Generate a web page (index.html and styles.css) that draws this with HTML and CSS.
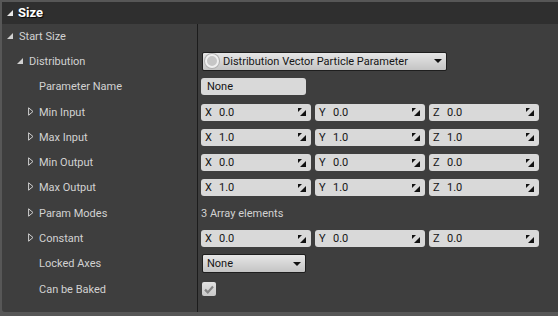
FILE: index.html
```html
<!DOCTYPE html>
<html lang="en">

<head>
    <meta charset="UTF-8">
    <meta name="viewport" content="width=device-width, initial-scale=1.0">
    <title>Details - Size</title>

    <link rel="stylesheet" href="styles.css">
</head>

<body>
    <div class="panel">
        <div class="category">
            <span class="arrow-open"></span>
            <span class="category-name">Size</span>
        </div>

        <ul class="rows">
            <li class="row">
                <div class="label indent-0"><span class="arrow-open"></span>Start Size</div>
                <div class="value"></div>
            </li>

            <li class="row">
                <div class="label indent-1"><span class="arrow-open"></span>Distribution</div>
                <div class="value">
                    <div class="combo combo-wide">
                        <span class="combo-icon"></span>
                        <span class="combo-text">Distribution Vector Particle Parameter</span>
                        <span class="combo-arrow"></span>
                    </div>
                </div>
            </li>

            <li class="row">
                <div class="label indent-2">Parameter Name</div>
                <div class="value">
                    <div class="textbox">None</div>
                </div>
            </li>

            <li class="row">
                <div class="label indent-2 expandable">Min Input</div>
                <div class="value">
                    <div class="vector" data-values="0.0,0.0,0.0"></div>
                </div>
            </li>

            <li class="row">
                <div class="label indent-2 expandable">Max Input</div>
                <div class="value">
                    <div class="vector" data-values="1.0,1.0,1.0"></div>
                </div>
            </li>

            <li class="row">
                <div class="label indent-2 expandable">Min Output</div>
                <div class="value">
                    <div class="vector" data-values="0.0,0.0,0.0"></div>
                </div>
            </li>

            <li class="row">
                <div class="label indent-2 expandable">Max Output</div>
                <div class="value">
                    <div class="vector" data-values="1.0,1.0,1.0"></div>
                </div>
            </li>

            <li class="row">
                <div class="label indent-2 expandable">Param Modes</div>
                <div class="value">
                    <span class="plain">3 Array elements</span>
                </div>
            </li>

            <li class="row">
                <div class="label indent-2 expandable">Constant</div>
                <div class="value">
                    <div class="vector" data-values="0.0,0.0,0.0"></div>
                </div>
            </li>

            <li class="row">
                <div class="label indent-2">Locked Axes</div>
                <div class="value">
                    <div class="combo combo-small">
                        <span class="combo-text">None</span>
                        <span class="combo-arrow"></span>
                    </div>
                </div>
            </li>

            <li class="row">
                <div class="label indent-2">Can be Baked</div>
                <div class="value">
                    <span class="checkbox">
                        <svg width="10" height="9" viewBox="0 0 10 9">
                            <path d="M1 4.6 L3.8 7.4 L9 1.6" fill="none" stroke="#858585" stroke-width="2.2" />
                        </svg>
                    </span>
                </div>
            </li>

            <li class="row row-fill">
                <div class="label"></div>
                <div class="value"></div>
            </li>
        </ul>
    </div>

    <script>
        const axes = ['X', 'Y', 'Z'];
        const spinIcon = `
            <svg class="spin" width="8" height="8" viewBox="0 0 8 8">
                <path d="M0 0 H4 L0 4 Z" fill="#111" />
                <path d="M8 2 V8 H2 Z" fill="#111" />
            </svg>
        `;
        const closedArrow = `
            <svg class="arrow-closed" width="6" height="9" viewBox="0 0 6 9">
                <path d="M0.6 0.8 L5 4.5 L0.6 8.2 Z" fill="none" stroke="#cfcfcf" stroke-width="1" />
            </svg>
        `;

        function vectorField(axis, value) {
            return `
                <div class="field">
                    <span class="axis">${axis}</span>
                    <span class="number">${value}</span>
                    ${spinIcon}
                </div>
            `;
        }

        document.querySelectorAll('.vector').forEach(vector => {
            const values = vector.dataset.values.split(',');
            vector.innerHTML = values.map((value, i) => vectorField(axes[i], value)).join('');
        });

        document.querySelectorAll('.expandable').forEach(label => {
            label.insertAdjacentHTML('afterbegin', closedArrow);
        });
    </script>
</body>

</html>
```

FILE: styles.css
```css
:root {
    --panel: #3e3e3e;
    --header: #2f2f2f;
    --edge: #575757;
    --divider: #1c1c1c;
    --label: #d2d2d2;
    --field: #d9d9d9;
    --field-text: #151515;
}

* {
    margin: 0;
    padding: 0;
    box-sizing: border-box;
}

body {
    background-color: var(--edge);
    font-family: Roboto, "Noto Sans", sans-serif;
    font-size: 11px;
    width: 558px;
    height: 316px;
    overflow: hidden;
}

.panel {
    margin-top: 2px;
    margin-left: 2px;
    height: 310px;
    background-color: var(--panel);
    border-bottom-left-radius: 3px;
    display: flex;
    flex-direction: column;
    overflow: hidden;
}

.category {
    height: 21.5px;
    background-color: var(--header);
    display: flex;
    align-items: center;
    padding-left: 5px;
    color: white;
    font-weight: bold;
    font-size: 13px;
    text-shadow: 1px 1px 1px #000;
}

.category .arrow-open {
    margin-right: 5px;
    border-bottom-color: #e8e8e8;
}

.rows {
    list-style: none;
    display: flex;
    flex-direction: column;
    flex: 1;
}

.row {
    height: 25.3px;
    display: flex;
    flex-direction: row;
}

.row-fill {
    flex: 1;
}

.label {
    width: 195px;
    display: flex;
    align-items: center;
    color: var(--label);
}

.indent-0 {
    padding-left: 5px;
}

.indent-1 {
    padding-left: 15px;
}

.indent-2 {
    padding-left: 37px;
}

.indent-2 .arrow-closed {
    margin-left: -11px;
    margin-right: 5px;
    margin-top: -2px;
}

.value {
    flex: 1;
    display: flex;
    align-items: center;
    border-left: 1px solid var(--divider);
    padding-left: 3px;
}

.arrow-open {
    width: 0;
    height: 0;
    border-left: 6px solid transparent;
    border-bottom: 6px solid #d0d0d0;
    margin-right: 6px;
}

.combo {
    height: 19px;
    display: flex;
    align-items: center;
    background: linear-gradient(to bottom, #e6e6e6, #c4c4c4);
    border: 1px solid #1e1e1e;
    border-radius: 2px;
    color: var(--field-text);
    margin-left: 1px;
}

.combo-wide {
    width: 245px;
}

.combo-small {
    width: 104px;
}

.combo-text {
    flex: 1;
    padding-left: 4px;
    white-space: nowrap;
}

.combo-icon {
    width: 14px;
    height: 14px;
    border-radius: 50%;
    border: 2px solid #f0f0f0;
    background: #c6c6c6;
    margin-left: 2px;
    box-shadow: 0 0 0 1px #b0b0b0;
}

.combo-arrow {
    width: 0;
    height: 0;
    border-left: 4px solid transparent;
    border-right: 4px solid transparent;
    border-top: 4px solid #111;
    margin-right: 4px;
}

.textbox {
    width: 105px;
    height: 17px;
    background-color: var(--field);
    border-radius: 3px;
    color: var(--field-text);
    padding-left: 6px;
    display: flex;
    align-items: center;
}

.vector {
    display: flex;
    flex-direction: row;
    gap: 4px;
}

.field {
    width: 110px;
    height: 17px;
    background-color: var(--field);
    border-radius: 3px;
    color: var(--field-text);
    display: flex;
    align-items: center;
    padding: 0 5px 0 4px;
}

.field .axis {
    width: 14px;
}

.field .number {
    flex: 1;
}

.plain {
    color: var(--label);
}

.checkbox {
    width: 14px;
    height: 14px;
    margin-left: 1px;
    background: linear-gradient(to bottom, #e2e2e2, #c8c8c8);
    border-radius: 2px;
    display: flex;
    align-items: center;
    justify-content: center;
}
```
